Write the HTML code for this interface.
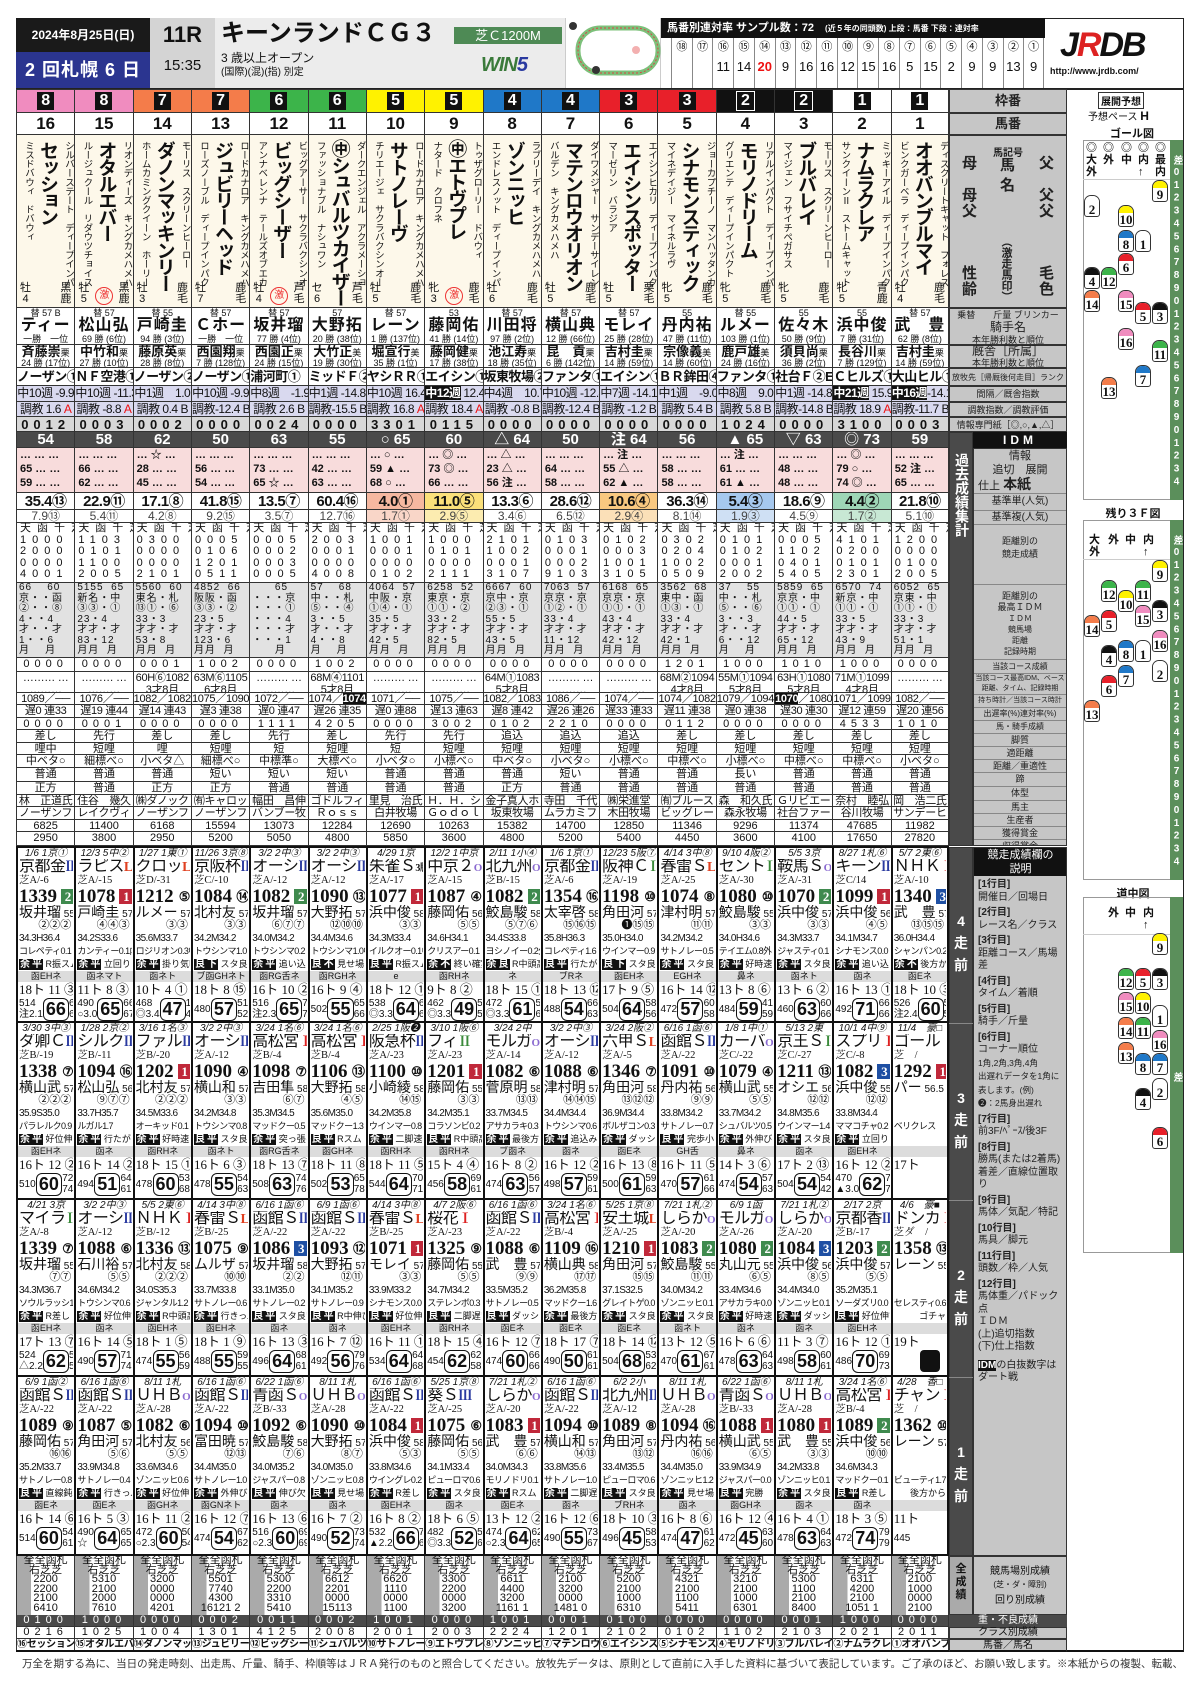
<!DOCTYPE html>
<html lang="ja"><head><meta charset="utf-8">
<style>
*{box-sizing:border-box;margin:0;padding:0}
body{width:1200px;height:1683px;background:#fff;position:relative;overflow:hidden;font-family:"Liberation Sans","Noto Sans CJK JP",sans-serif;color:#111}
.abs{position:absolute}
.r{position:absolute;left:16px;width:933px;display:grid;grid-template-columns:repeat(16,1fr);border-bottom:1px solid #333}
.r>div{border-left:1px solid #333;overflow:hidden;white-space:nowrap;text-align:center;position:relative}
.r>div:last-child{border-right:1px solid #333}
.fr>div{display:flex;align-items:center;justify-content:center}
.fr span{display:inline-block;width:17px;height:18px;background:#111;color:#fff;font-weight:bold;font-size:16px;line-height:18px;text-align:center}
.num>div{font-size:17px;font-weight:bold;line-height:22px}
.nm>div{background:#fdf8ea}
.vt{writing-mode:vertical-rl;text-orientation:upright;position:absolute;top:6px;white-space:nowrap}
.big{font-size:19px;font-weight:bold;letter-spacing:-2.4px;left:17px}
.sm{font-size:9.5px;letter-spacing:-.4px}
.sx{position:absolute;bottom:2px;font-size:11px;line-height:11px;text-align:center}
.jk>div{font-size:9px;line-height:10px}
.jk .jn{font-size:16px;font-weight:bold;line-height:16px;letter-spacing:1px;display:block}
.tr>div{font-size:9px;line-height:10px}
.tr .tn{font-size:13px;font-weight:bold;line-height:13px}
.t1>div{font-size:13px;line-height:17px;letter-spacing:-.5px;font-weight:bold}
.lav>div{background:#d9d9ef;font-size:12px;line-height:15px;letter-spacing:-.5px}
.dg>div{background:#d8d8d8;font-size:13px;line-height:15px;letter-spacing:5px;font-weight:bold}
.idm>div{background:#4a4a4a;color:#fff;font-size:15px;font-weight:bold;line-height:16px}
.pk>div{background:#f8dcdc;font-size:11px;line-height:14px;text-align:left;padding-left:3px;font-weight:bold}
.kt>div{font-size:15px;font-weight:bold;line-height:17px;letter-spacing:-.5px}
.kf>div{font-size:12px;line-height:12px;color:#444}
.ds>div{font-size:11px;line-height:11.5px;letter-spacing:6px;padding-left:3px;text-align:left}
.gb>div{background:#e2e2e2;font-size:10px;line-height:10.5px;text-align:left;padding-left:2px;letter-spacing:1px;white-space:pre}
.s1>div{font-size:11px;line-height:12px}
.s2>div{font-size:11px;line-height:12px;letter-spacing:-.3px}
.rb{position:absolute;left:16px;width:933px;display:grid;grid-template-columns:repeat(16,1fr);border-bottom:2px solid #111}
.rb>div{border-left:2px solid #111;overflow:hidden;white-space:nowrap;position:relative;padding:0 1px}
.rb>div:last-child{border-right:2px solid #111}
.rb>div>span{display:block;overflow:hidden}
.a{height:11px;font-size:10px;line-height:11px;font-style:italic;text-align:center}
.b{height:15px;font-size:16px;line-height:16px;letter-spacing:-.5px}
.b em{font-style:normal;font-family:"Liberation Serif","Noto Serif CJK SC",serif;font-weight:bold;font-size:14px}
.g1{color:#d22}.g2{color:#3a8a3a}.g3{color:#2a3aa0}.gl{color:#e04020}.go{color:#8a6ad0;font-size:11px!important}
.c{height:14px;font-size:10.5px;line-height:14px;font-family:"Liberation Serif","Noto Serif CJK SC",serif}
.d{height:17px;font-family:"Liberation Serif",serif;font-weight:bold;font-size:19px;line-height:17px}
.d i{font-style:normal;display:inline-block;min-width:14px;height:15px;font-size:13px;line-height:15px;text-align:center;margin-left:4px;vertical-align:1px}
.w1{background:#c0283a;color:#fff}.w2{background:#3f8a4e;color:#fff}.w3{background:#1e4fa3;color:#fff}
.e{height:14px;font-size:14px;line-height:14px}
.e small{font-size:10px}
.f{height:13px;font-size:11px;line-height:13px;text-align:right;padding-right:2px}
.h{height:13px;font-size:10px;line-height:13px;letter-spacing:-.6px}
.k{height:12px;font-size:9px;line-height:12px;letter-spacing:-.6px}
.l{height:14px;font-size:9px;line-height:14px}
.l b{background:#111;color:#fff;padding:0 1px;font-size:10px}
.m{height:11px;font-size:9px;line-height:11px;background:#dcdcdc;text-align:center;margin:0 -1px}
.n{height:15px;font-size:13px;line-height:15px;font-family:"Liberation Serif",serif}
.rb .o{height:24px;display:flex;align-items:center;justify-content:space-between;font-size:10px;line-height:11px}
.rb .o span{display:inline-block}
.o strong{border:1.5px solid #111;border-radius:6px;font-size:18px;padding:0 2px;line-height:21px;font-family:"Liberation Sans",sans-serif}
.lg{position:absolute;left:949px;width:118px;background:#c6c6c6;border:1px solid #333;font-size:10px;text-align:center;color:#222}
.cap{position:absolute;width:16px;height:22px;border:1px solid #333;border-radius:7px 7px 3px 3px;background:#fff;font-family:"Liberation Serif",serif;font-size:13px;font-weight:bold;text-align:center;line-height:28px;overflow:hidden}
.cap::before{content:"";position:absolute;left:0;top:0;width:100%;height:7px;background:var(--c)}
.stripe{position:absolute;left:1170px;width:13px;background:#5b8f5b;color:#fff;font-size:10px;line-height:13px;text-align:center;font-weight:bold;writing-mode:vertical-rl;text-orientation:upright;letter-spacing:1.9px;overflow:hidden;padding-top:4px}
</style></head><body>

<!-- HEADER -->
<div class="abs" style="left:16px;top:18px;width:1168px;height:71px;border:1px solid #222"></div>
<div class="abs" style="left:16px;top:18px;width:134px;height:34px;background:#1a1a1a;color:#fff;font-size:12px;font-weight:bold;line-height:34px;text-align:center">2024年8月25日(日)</div>
<div class="abs" style="left:16px;top:52px;width:134px;height:36px;background:#2b3590;color:#fff;font-size:18px;font-weight:bold;line-height:36px;text-align:center;letter-spacing:1px">2 回札幌 6 日</div>
<div class="abs" style="left:150px;top:18px;width:65px;height:70px;background:#d4d4d4;text-align:center"><div style="font-size:22px;font-weight:bold;line-height:34px">11R</div><div style="font-size:15px;line-height:28px">15:35</div></div>
<div class="abs" style="left:215px;top:18px;width:236px;height:70px;background:#ececec;padding-left:6px;overflow:hidden">
<div style="font-size:24px;font-weight:bold;line-height:32px;letter-spacing:0;white-space:nowrap">キーンランドＣＧ３</div>
<div style="font-size:12px;line-height:16px">3 歳以上オープン</div>
<div style="font-size:10px;line-height:14px">(国際)(混)(指) 別定</div></div>
<div class="abs" style="left:451px;top:18px;width:114px;height:70px;background:#ececec">
<div style="margin:9px 0 0 3px;width:108px;height:17px;background:#4e8a55;color:#fff;font-size:13px;line-height:17px;text-align:center">芝Ｃ1200M</div>
<div style="margin:10px 0 0 30px;font-size:20px;font-weight:900;font-style:italic;color:#3a7a3a;letter-spacing:-1px">WIN<span style="color:#2a3aa0">5</span></div></div>
<div class="abs" style="left:565px;top:18px;width:96px;height:70px;background:#fff;border-left:1px solid #ccc;border-right:1px solid #ccc">
<svg width="96" height="70"><rect x="12" y="10" width="80" height="45" rx="22" fill="none" stroke="#7cc07a" stroke-width="5"/><rect x="12" y="10" width="80" height="45" rx="22" fill="none" stroke="#d44" stroke-width="1" stroke-dasharray="2 2"/><circle cx="7" cy="8" r="4" fill="#333"/><circle cx="30" cy="52" r="4" fill="#333"/><circle cx="70" cy="32" r="4" fill="#f3b0b0"/></svg></div>
<div class="abs" style="left:661px;top:18px;width:384px;height:20px;background:#111;color:#fff;font-size:11px;line-height:20px;padding-left:6px;font-weight:bold;white-space:nowrap;overflow:hidden">馬番別連対率 サンプル数：72 <span style="font-size:8px">　(近５年の同頭数) 上段：馬番 下段：連対率</span></div>
<div class="abs" style="left:671px;top:38px;width:373px;height:50px;display:grid;grid-template-columns:repeat(18,1fr);font-size:11px;text-align:center">
<div style="border-left:1px solid #888">⑱<br><br></div><div style="border-left:1px solid #888">⑰</div><div style="border-left:1px solid #888">⑯<br><span style="font-size:13px;line-height:26px">11</span></div><div style="border-left:1px solid #888">⑮<br><span style="font-size:13px;line-height:26px">14</span></div><div style="border-left:1px solid #888">⑭<br><span style="font-size:13px;line-height:26px;color:#e11;font-weight:bold">20</span></div><div style="border-left:1px solid #888">⑬<br><span style="font-size:13px;line-height:26px">9</span></div><div style="border-left:1px solid #888">⑫<br><span style="font-size:13px;line-height:26px">16</span></div><div style="border-left:1px solid #888">⑪<br><span style="font-size:13px;line-height:26px">16</span></div><div style="border-left:1px solid #888">⑩<br><span style="font-size:13px;line-height:26px">12</span></div><div style="border-left:1px solid #888">⑨<br><span style="font-size:13px;line-height:26px">15</span></div><div style="border-left:1px solid #888">⑧<br><span style="font-size:13px;line-height:26px">16</span></div><div style="border-left:1px solid #888">⑦<br><span style="font-size:13px;line-height:26px">5</span></div><div style="border-left:1px solid #888">⑥<br><span style="font-size:13px;line-height:26px">15</span></div><div style="border-left:1px solid #888">⑤<br><span style="font-size:13px;line-height:26px">2</span></div><div style="border-left:1px solid #888">④<br><span style="font-size:13px;line-height:26px">9</span></div><div style="border-left:1px solid #888">③<br><span style="font-size:13px;line-height:26px">9</span></div><div style="border-left:1px solid #888">②<br><span style="font-size:13px;line-height:26px">13</span></div><div style="border-left:1px solid #888;border-right:1px solid #888">①<br><span style="font-size:13px;line-height:26px">9</span></div></div>
<div class="abs" style="left:1060px;top:26px;font-size:34px;font-weight:900;font-style:italic;letter-spacing:-2px;color:#111">J<span style="color:#d22">R</span>DB</div>
<div class="abs" style="left:1050px;top:66px;font-size:9px;font-weight:bold">http://www.jrdb.com/</div>

<!-- FRAME ROW -->
<div class="r fr" style="top:89px;height:24px;border-top:1px solid #333">
<div style="background:#f08cbf"><span>8</span></div><div style="background:#f08cbf"><span>8</span></div><div style="background:#f47c4a"><span>7</span></div><div style="background:#f47c4a"><span>7</span></div><div style="background:#3cb44a"><span>6</span></div><div style="background:#3cb44a"><span>6</span></div><div style="background:#fff200"><span>5</span></div><div style="background:#fff200"><span>5</span></div><div style="background:#1f78c8"><span>4</span></div><div style="background:#1f78c8"><span>4</span></div><div style="background:#e8202a"><span>3</span></div><div style="background:#e8202a"><span>3</span></div><div style="background:#111"><span style="outline:1px solid #fff">2</span></div><div style="background:#111"><span style="outline:1px solid #fff">2</span></div><div style="background:#fff"><span>1</span></div><div style="background:#fff"><span>1</span></div></div>
<div class="r num" style="top:113px;height:22px"><div>16</div><div>15</div><div>14</div><div>13</div><div>12</div><div>11</div><div>10</div><div>9</div><div>8</div><div>7</div><div>6</div><div>5</div><div>4</div><div>3</div><div>2</div><div>1</div></div>

<!-- NAMES -->
<div class="r nm" style="top:135px;height:173px">
<div><span class="vt sm" style="left:4px">ミスドバウィ　ドバウィ</span><span class="vt big">セッション</span><span class="vt sm" style="left:44px">シルバーステート　ディープインパ</span><span class="sx" style="left:3px">牡<br>4</span><span class="sx" style="right:3px">黒<br>鹿</span></div>
<div><span class="vt sm" style="left:4px">ルージュクール　リダウツチョイス</span><span class="vt big">オタルエバー</span><span class="vt sm" style="left:44px">リオンディーズ　キングカメハメハ</span><span class="sx" style="left:3px">牡<br>5</span><span class="abs" style="left:20px;bottom:2px;width:18px;height:18px;border:1px solid #e33;border-radius:50%;color:#e33;font-size:10px;line-height:16px">激</span><span class="sx" style="right:3px">黒<br>鹿</span></div>
<div><span class="vt sm" style="left:4px">ホームカミングクイーン　ホーリー</span><span class="vt big">ダノンマッキンリー</span><span class="vt sm" style="left:44px">モーリス　スクリーンヒーロー</span><span class="sx" style="left:3px">牡<br>3</span><span class="sx" style="right:3px">鹿<br>毛</span></div>
<div><span class="vt sm" style="left:4px">ローズノーブル　ディープインパク</span><span class="vt big">ジュビリーヘッド</span><span class="vt sm" style="left:44px">ロードカナロア　キングカメハメハ</span><span class="sx" style="left:3px">牡<br>7</span><span class="sx" style="right:3px">鹿<br>毛</span></div>
<div><span class="vt sm" style="left:4px">アンナベレンナ　テールズオブエカ</span><span class="vt big">ビッグシーザー</span><span class="vt sm" style="left:44px">ビッグアーサー　サクラバクシンオ</span><span class="sx" style="left:3px">牡<br>4</span><span class="abs" style="left:20px;bottom:2px;width:18px;height:18px;border:1px solid #e33;border-radius:50%;color:#e33;font-size:10px;line-height:16px">激</span><span class="sx" style="right:3px">芦<br>毛</span></div>
<div><span class="vt sm" style="left:4px">ファッショナブル　ナシュワン</span><span class="vt big" style="top:4px">㊥シュバルツカイザー</span><span class="vt sm" style="left:44px">ダークエンジェル　アクラメーショ</span><span class="sx" style="left:3px">セ<br>6</span><span class="sx" style="right:3px">芦<br>毛</span></div>
<div><span class="vt sm" style="left:4px">チリエージェ　サクラバクシンオー</span><span class="vt big">サトノレーヴ</span><span class="vt sm" style="left:44px">ロードカナロア　キングカメハメハ</span><span class="sx" style="left:3px">牡<br>5</span><span class="sx" style="right:3px">鹿<br>毛</span></div>
<div><span class="vt sm" style="left:4px">ナタード　クロフネ</span><span class="vt big" style="top:4px">㊥エトヴプレ</span><span class="vt sm" style="left:44px">トゥザグローリー　ドバウィ</span><span class="sx" style="left:3px">牝<br>3</span><span class="abs" style="left:20px;bottom:2px;width:18px;height:18px;border:1px solid #e33;border-radius:50%;color:#e33;font-size:10px;line-height:16px">激</span><span class="sx" style="right:3px">鹿<br>毛</span></div>
<div><span class="vt sm" style="left:4px">エンドレスノット　ディープインパ</span><span class="vt big">ゾンニッヒ</span><span class="vt sm" style="left:44px">ラブリーデイ　キングカメハメハ</span><span class="sx" style="left:3px">牡<br>6</span><span class="sx" style="right:3px">鹿<br>毛</span></div>
<div><span class="vt sm" style="left:4px">バルデン　キングカメハメハ</span><span class="vt big">マテンロウオリオン</span><span class="vt sm" style="left:44px">ダイワメジャー　サンデーサイレン</span><span class="sx" style="left:3px">牡<br>5</span><span class="sx" style="right:3px">鹿<br>毛</span></div>
<div><span class="vt sm" style="left:4px">マーゼリン　バラジア</span><span class="vt big">エイシンスポッター</span><span class="vt sm" style="left:44px">エイシンヒカリ　ディープインパク</span><span class="sx" style="left:3px">牡<br>5</span><span class="sx" style="right:3px">栗<br>毛</span></div>
<div><span class="vt sm" style="left:4px">マイネデイジー　マイネルラヴ</span><span class="vt big">シナモンスティック</span><span class="vt sm" style="left:44px">ジョーカプチーノ　マンハッタンカ</span><span class="sx" style="left:3px">牝<br>5</span><span class="sx" style="right:3px">鹿<br>毛</span></div>
<div><span class="vt sm" style="left:4px">グリエンテ　ディープインパクト</span><span class="vt big">モリノドリーム</span><span class="vt sm" style="left:44px">リアルインパクト　ディープインパ</span><span class="sx" style="left:3px">牝<br>5</span><span class="sx" style="right:3px">鹿<br>毛</span></div>
<div><span class="vt sm" style="left:4px">マイジェン　フサイチペガサス</span><span class="vt big">ブルバレイ</span><span class="vt sm" style="left:44px">モーリス　スクリーンヒーロー</span><span class="sx" style="left:3px">牝<br>5</span><span class="sx" style="right:3px">鹿<br>毛</span></div>
<div><span class="vt sm" style="left:4px">サンクイーンⅡ　ストームキャット</span><span class="vt big">ナムラクレア</span><span class="vt sm" style="left:44px">ミッキーアイル　ディープインパク</span><span class="sx" style="left:3px">牝<br>5</span><span class="sx" style="right:3px">青<br>鹿</span></div>
<div><span class="vt sm" style="left:4px">ビンクガーベラ　ディープインパク</span><span class="vt big">オオバンブルマイ</span><span class="vt sm" style="left:44px">ディスクリートキャット　フォレス</span><span class="sx" style="left:3px">牡<br>4</span><span class="sx" style="right:3px">鹿<br>毛</span></div>
</div>

<!-- JOCKEY -->
<div class="r jk" style="top:308px;height:37px">
<div>替 57 B<span class="jn">ティー</span>一勝　一位</div>
<div>替 57<span class="jn">松山弘</span>69 勝 (6位)</div>
<div>替 55<span class="jn">戸崎圭</span>94 勝 (3位)</div>
<div>替 57<span class="jn">Ｃホー</span>一勝　一位</div>
<div>替 57<span class="jn">坂井瑠</span>77 勝 (4位)</div>
<div>57<span class="jn">大野拓</span>20 勝 (38位)</div>
<div>替 57<span class="jn">レーン</span>1 勝 (137位)</div>
<div>53<span class="jn">藤岡佑</span>41 勝 (14位)</div>
<div>替 57<span class="jn">川田将</span>97 勝 (2位)</div>
<div>替 57<span class="jn">横山典</span>12 勝 (66位)</div>
<div>替 57<span class="jn">モレイ</span>25 勝 (28位)</div>
<div>55<span class="jn">丹内祐</span>47 勝 (11位)</div>
<div>替 55<span class="jn">ルメー</span>103 勝 (1位)</div>
<div>55<span class="jn">佐々木</span>50 勝 (9位)</div>
<div>55<span class="jn">浜中俊</span>7 勝 (31位)</div>
<div>替 57<span class="jn">武　豊</span>62 勝 (8位)</div></div>
<div class="r tr" style="top:345px;height:23px">
<div><span class="tn">斉藤崇</span>栗<br>24 勝 (17位)</div><div><span class="tn">中竹和</span>栗<br>27 勝 (10位)</div><div><span class="tn">藤原英</span>栗<br>28 勝 (8位)</div><div><span class="tn">西園翔</span>栗<br>7 勝 (128位)</div><div><span class="tn">西園正</span>栗<br>24 勝 (15位)</div><div><span class="tn">大竹正</span>美<br>19 勝 (30位)</div><div><span class="tn">堀宣行</span>美<br>35 勝 (1位)</div><div><span class="tn">藤岡健</span>栗<br>17 勝 (38位)</div><div><span class="tn">池江寿</span>栗<br>18 勝 (35位)</div><div><span class="tn">昆　貢</span>栗<br>6 勝 (142位)</div><div><span class="tn">吉村圭</span>栗<br>14 勝 (59位)</div><div><span class="tn">宗像義</span>美<br>14 勝 (60位)</div><div><span class="tn">鹿戸雄</span>美<br>24 勝 (16位)</div><div><span class="tn">須貝尚</span>栗<br>36 勝 (2位)</div><div><span class="tn">長谷川</span>栗<br>7 勝 (129位)</div><div><span class="tn">吉村圭</span>栗<br>14 勝 (59位)</div></div>
<div class="r t1" style="top:368px;height:18px"><div>ノーザン①D</div><div>ＮＦ空港①D</div><div>ノーザン②<span style="color:#e11">A</span></div><div>ノーザン①D</div><div>浦河町①　-</div><div>ミッドＦ②B</div><div>ヤシＲＲ①-</div><div>エイシン①<span style="color:#e11">A</span></div><div>坂東牧場②<span style="color:#e11">A</span></div><div>ファンタ①C</div><div>エイシン①<span style="color:#e11">A</span></div><div>ＢＲ鉾田④D</div><div>ファンタ①C</div><div>社台Ｆ②E</div><div>Ｃヒルズ①<span style="color:#e11">A</span></div><div>大山ヒル①<span style="color:#e11">A</span></div></div>
<div class="r lav" style="top:386px;height:16px"><div>中10週 -9.9</div><div>中10週 -11.3</div><div>中1週　1.0</div><div>中10週 -9.9</div><div>中8週　-1.9</div><div>中1週 -14.8</div><div>中10週 16.4</div><div><b style="background:#111;color:#fff">中12週</b> 12.4</div><div>中4週　10.7</div><div>中10週 -12.4</div><div>中7週 -14.1</div><div>中1週　-9.0</div><div>中8週　9.0</div><div>中1週 -14.8</div><div><b style="background:#111;color:#fff">中21週</b> 15.9</div><div><b style="background:#111;color:#fff">中16週</b>-14.1</div></div>
<div class="r lav" style="top:402px;height:15px"><div>調教 1.6 <span style="color:#e11">A</span></div><div>調教 -8.8 <span style="color:#e11">A</span></div><div>調教 0.4 B</div><div>調教-12.4 B</div><div>調教 2.6 B</div><div>調教-15.5 B</div><div>調教 16.8 <span style="color:#e11">A</span></div><div>調教 18.4 <span style="color:#e11">A</span></div><div>調教 -0.8 B</div><div>調教-12.4 B</div><div>調教 -1.2 B</div><div>調教 5.4 B</div><div>調教 5.8 B</div><div>調教-14.8 B</div><div>調教 18.9 <span style="color:#e11">A</span></div><div>調教-11.7 B</div></div>
<div class="r dg" style="top:417px;height:15px"><div>0012</div><div>0003</div><div>0002</div><div>0000</div><div>0024</div><div>0000</div><div>3301</div><div>0115</div><div>0000</div><div>0000</div><div>0000</div><div>0000</div><div>1024</div><div>0000</div><div>3100</div><div>0003</div></div>
<div class="r idm" style="top:432px;height:16px"><div>54</div><div>58</div><div>62</div><div>50</div><div>63</div><div>55</div><div>○ 65</div><div>60</div><div>△ 64</div><div>50</div><div>注 64</div><div>56</div><div>▲ 65</div><div>▽ 63</div><div>◎ 73</div><div>59</div></div>
<div class="r pk" style="top:448px;height:45px"><div>… … …<br>65 … …<br>59 … …</div><div>… … …<br>66 … …<br>62 … …</div><div>… ☆ …<br>28 … …<br>45 … …</div><div>… … …<br>56 … …<br>54 … …</div><div>… … …<br>73 … …<br>65 ☆ …</div><div>… … …<br>42 … …<br>63 … …</div><div>… ○ …<br>59 ▲ …<br>68 ○ …</div><div>… ◎ …<br>73 ◎ …<br>66 … …</div><div>… △ …<br>23 △ …<br>56 注 …</div><div>… … …<br>64 … …<br>58 … …</div><div>… 注 …<br>55 △ …<br>62 ▲ …</div><div>… … …<br>58 … …<br>58 … …</div><div>… 注 …<br>61 … …<br>61 ▲ …</div><div>… … …<br>48 … …<br>48 … …</div><div>… ◎ …<br>79 ○ …<br>74 ◎ …</div><div>… … …<br>52 注 …<br>65 … …</div></div>
<div class="r kt" style="top:493px;height:17px"><div>35.4⑬</div><div>22.9⑪</div><div>17.1⑧</div><div>41.8⑮</div><div>13.5⑦</div><div>60.4⑯</div><div style="background:#f6b8a0">4.0①</div><div style="background:#fbe07a">11.0⑤</div><div>13.3⑥</div><div>28.6⑫</div><div style="background:#f9c880">10.6④</div><div>36.3⑭</div><div style="background:#a6c8ee">5.4③</div><div>18.6⑨</div><div style="background:#9ed6b6">4.4②</div><div>21.8⑩</div></div>
<div class="r kf" style="top:510px;height:13px"><div>7.9⑬</div><div>5.4⑪</div><div>4.2⑧</div><div>9.2⑮</div><div>3.5⑦</div><div>12.7⑯</div><div style="background:#f9d6c8">1.7①</div><div style="background:#fcecb0">2.9⑤</div><div>3.4⑥</div><div>6.5⑫</div><div style="background:#fbe0b8">2.9④</div><div>8.1⑭</div><div style="background:#cfe0f4">1.9③</div><div>4.5⑨</div><div style="background:#c8e8d4">1.7②</div><div>5.1⑩</div></div>
<div class="r ds" style="top:523px;height:60px"><div>天函千芝<br>1000<br>2000<br>0000<br>4001</div><div>天函千芝<br>1103<br>0101<br>1100<br>2005</div><div>天函千芝<br>0300<br>0000<br>0000<br>2101</div><div>天函千芝<br>0005<br>0106<br>1201<br>0511</div><div>天函千芝<br>0005<br>0002<br>0003<br>0005</div><div>天函千芝<br>2003<br>0001<br>0000<br>4008</div><div>天函千芝<br>1001<br>0001<br>0000<br>0102</div><div>天函千芝<br>1000<br>0101<br>0000<br>2111</div><div>天函千芝<br>2101<br>1002<br>0001<br>3107</div><div>天函千芝<br>0103<br>0001<br>0002<br>9103</div><div>天函千芝<br>0102<br>0003<br>1001<br>3105</div><div>天函千芝<br>0302<br>0204<br>1002<br>0509</div><div>天函千芝<br>0101<br>0102<br>0001<br>2002</div><div>天函千芝<br>0005<br>1102<br>0401<br>5405</div><div>天函千芝<br>4101<br>0200<br>0101<br>2301</div><div>天函千芝<br>1200<br>0000<br>0100<br>2005</div></div>
<div class="r gb" style="top:583px;height:75px"><div>66    60
京・・函
②・・⑧
4・・4
才・・才
1・・6
月    月</div><div>5155  65
新名・中
③③・①
23・4
才才・才
83・12
月月  月</div><div>5560  60
東名・札
⑬①・⑥
33・3
才才・才
53・8
月月  月</div><div>4852  66
阪阪・函
③③・②
23・5
才才・才
123・6
月月  月</div><div>      65
・・・京
・・・①
・・・4
・・・才
・・・1
      月</div><div>57    68
中・・札
⑤・・④
3・・5
才・・才
4・・8
月    月</div><div>4064  57
中阪・京
①④・①
35・5
才才・才
42・5
月月  月</div><div>6258  52
東京・京
①①・②
33・2
才才・才
82・5
月月  月</div><div>6667  60
京中・京
②③・①
55・5
才才・才
43・5
月月  月</div><div>7063  57
京京・京
①②・①
33・4
才才・才
11・12
月月  月</div><div>6168  65
京京・京
①①・①
43・4
才才・才
42・12
月月  月</div><div>3562  68
東中・函
①③・①
33・4
才才・才
42・1
月月  月</div><div>37    55
中・・札
⑤・・⑥
3・・3
才・・才
6・・12
月    月</div><div>5859  65
京京・中
①①・①
44・5
才才・才
65・12
月月  月</div><div>6570  74
新京・中
①①・①
33・5
才才・才
43・9
月月  月</div><div>6052  65
京東・中
①①・①
33・3
才才・才
51・1
月月  月</div></div>
<div class="r s1" style="top:658px;height:14px;letter-spacing:5px"><div>0000</div><div>0000</div><div>0001</div><div>1002</div><div>0000</div><div>1002</div><div>0000</div><div>0000</div><div>0000</div><div>0000</div><div>0000</div><div>1201</div><div>1000</div><div>1010</div><div>1000</div><div>0000</div></div>
<div class="r s2" style="top:672px;height:21px;font-size:10px"><div>……… …<br>………</div><div>……… …<br>………</div><div>60H⑥1082<br>3才8月</div><div>63M⑥1105<br>6才8月</div><div>……… …<br>………</div><div>68M④1101<br>5才8月</div><div>……… …<br>………</div><div>……… …<br>………</div><div>64M①1083<br>5才8月</div><div>……… …<br>………</div><div>……… …<br>………</div><div>68M②1094<br>4才8月</div><div>55M①1094<br>5才8月</div><div>63H①1080<br>5才8月</div><div>71M①1099<br>4才8月</div><div>……… …<br>………</div></div>
<div class="r s2" style="top:693px;height:12px"><div>1089／──</div><div>1076／──</div><div>1082／1082</div><div>1075／1090</div><div>1072／──</div><div>1074／<b style="background:#111;color:#fff">1074</b></div><div>1071／──</div><div>1075／──</div><div>1082／1083</div><div>1086／──</div><div>1074／──</div><div>1074／1082</div><div>1079／1094</div><div><b style="background:#111;color:#fff">1070</b>／1080</div><div>1071／1099</div><div>1082／──</div></div>
<div class="r s2" style="top:705px;height:13px"><div>遅0 連33</div><div>遅19 連44</div><div>遅14 連43</div><div>遅3 連38</div><div>遅0 連47</div><div>遅26 連35</div><div>遅0 連88</div><div>遅13 連63</div><div>遅8 連42</div><div>遅26 連26</div><div>遅33 連33</div><div>遅11 連38</div><div>遅0 連38</div><div>遅30 連30</div><div>遅12 連59</div><div>遅20 連56</div></div>
<div class="r s1" style="top:718px;height:12px;letter-spacing:5px"><div>0000</div><div>0001</div><div>0000</div><div>0000</div><div>1111</div><div>4205</div><div>0000</div><div>3002</div><div>0102</div><div>2210</div><div>0000</div><div>0112</div><div>0000</div><div>0000</div><div>4533</div><div>1010</div></div>
<div class="r s1" style="top:730px;height:13px"><div>差し</div><div>先行</div><div>差し</div><div>差し</div><div>先行</div><div>差し</div><div>先行</div><div>先行</div><div>追込</div><div>追込</div><div>追込</div><div>差し</div><div>差し</div><div>差し</div><div>差し</div><div>差し</div></div>
<div class="r s1" style="top:743px;height:12px"><div>哩中</div><div>短哩</div><div>哩</div><div>短哩</div><div>短</div><div>短哩</div><div>短</div><div>短哩</div><div>短哩</div><div>短哩</div><div>短哩</div><div>短哩</div><div>短哩</div><div>短哩</div><div>短哩</div><div>短哩</div></div>
<div class="r s1" style="top:755px;height:13px"><div>中ベタ○</div><div>細標べ○</div><div>小ベタ△</div><div>細標べ○</div><div>中標準○</div><div>大標べ○</div><div>小ベタ○</div><div>小標べ○</div><div>中ベタ○</div><div>小ベタ○</div><div>小標べ○</div><div>中標べ○</div><div>小標べ○</div><div>中標べ○</div><div>中標べ○</div><div>小ベタ○</div></div>
<div class="r s1" style="top:768px;height:14px"><div>普通</div><div>普通</div><div>普通</div><div>短い</div><div>短い</div><div>短い</div><div>普通</div><div>普通</div><div>普通</div><div>短い</div><div>普通</div><div>普通</div><div>長い</div><div>普通</div><div>普通</div><div>普通</div></div>
<div class="r s1" style="top:782px;height:13px"><div>正方</div><div>普通</div><div>正方</div><div>正方</div><div>普通</div><div>普通</div><div>普通</div><div>普通</div><div>正方</div><div>普通</div><div>普通</div><div>普通</div><div>普通</div><div>普通</div><div>普通</div><div>普通</div></div>
<div class="r s2" style="top:795px;height:12px"><div>林　正道氏</div><div>住谷　幾久</div><div>㈱ダノック</div><div>㈲キャロッ</div><div>幅田　昌伸</div><div>ゴドルフィ</div><div>里見　治氏</div><div>Ｈ．Ｈ．シ</div><div>金子真人ホ</div><div>寺田　千代</div><div>㈱栄進堂</div><div>㈲ブルース</div><div>森　和久氏</div><div>Ｇリビエー</div><div>奈村　睦弘</div><div>岡　浩二氏</div></div>
<div class="r s2" style="top:807px;height:13px"><div>ノーザンフ</div><div>レイクヴィ</div><div>ノーザンフ</div><div>ノーザンフ</div><div>バンブー牧</div><div>Ｒｏｓｓ</div><div>白井牧場</div><div>Ｇｏｄｏｌ</div><div>坂東牧場</div><div>ムラカミフ</div><div>木田牧場</div><div>ビッグレー</div><div>森永牧場</div><div>社台ファー</div><div>谷川牧場</div><div>サンデーヒ</div></div>
<div class="r s1" style="top:820px;height:12px;font-size:12px"><div>6825</div><div>11400</div><div>6168</div><div>15594</div><div>13073</div><div>12284</div><div>12690</div><div>10263</div><div>15382</div><div>14700</div><div>12850</div><div>11346</div><div>9296</div><div>11374</div><div>47685</div><div>11982</div></div>
<div class="r s1" style="top:832px;height:14px;font-size:12px"><div>2950</div><div>3800</div><div>2950</div><div>5200</div><div>5050</div><div>4800</div><div>5850</div><div>3600</div><div>4800</div><div>5200</div><div>5400</div><div>4450</div><div>3600</div><div>4100</div><div>17650</div><div>27820</div></div>

<!-- RACE BLOCK 1 -->
<div class="rb" style="top:846px;height:177px;border-top:2px solid #111">
<div><span class="a">1/6 1京①</span><span class="b">京都金<em class="g3">Ⅲ</em></span><span class="c">芝A/-6</span><span class="d">1339<i class="w2">2</i></span><span class="e">坂井瑠<small> 55</small></span><span class="f">②②②</span><span class="h">34.3H36.4</span><span class="k">コレペティ0.1</span><span class="l"><b>余</b><b>平</b> R振スム</span><span class="m">函EHネ</span><span class="n">18ト 11 ③</span><span class="o"><span>514<br>注2.1</span><strong>66</strong><span>60<br>64</span></span></div>
<div><span class="a">12/3 5中②</span><span class="b">ラピス<em class="gl">L</em></span><span class="c">芝A/-15</span><span class="d">1078<i class="w1">1</i></span><span class="e">戸崎圭<small> 57</small></span><span class="f">④④③</span><span class="h">34.2S33.6</span><span class="k">カンティー0.1内</span><span class="l"><b>余</b><b>平</b> 立回り</span><span class="m">函ネマト</span><span class="n">11ト 8 ③</span><span class="o"><span>490<br>○3.0</span><strong>65</strong><span>66<br>67</span></span></div>
<div><span class="a">1/27 1東①</span><span class="b">クロッ<em class="gl">L</em></span><span class="c">芝D/-31</span><span class="d">1212<i>⑤</i></span><span class="e">ルメー<small> 57</small></span><span class="f">③③</span><span class="h">35.6M33.7</span><span class="k">ロジリオン0.3中</span><span class="l"><b>余</b><b>平</b> 掛り気味</span><span class="m">函ネト</span><span class="n">10ト 4 ①</span><span class="o"><span>468<br>◎3.4</span><strong>47</strong><span>16<br>41</span></span></div>
<div><span class="a">11/26 3京⑧</span><span class="b">京阪杯<em class="g3">Ⅲ</em></span><span class="c">芝C/-10</span><span class="d">1084<i>⑭</i></span><span class="e">北村友<small> 57</small></span><span class="f">③③</span><span class="h">34.2M34.2</span><span class="k">トウシンマ1.0</span><span class="l"><b>良</b><b>下</b> スタ良い</span><span class="m">ブ函GHネト</span><span class="n">18ト 8 ⑮</span><span class="o"><span>480<br></span><strong>57</strong><span>51<br>52</span></span></div>
<div><span class="a">3/2 2中③</span><span class="b">オーシ<em class="g3">Ⅲ</em></span><span class="c">芝A/-12</span><span class="d">1082<i class="w2">2</i></span><span class="e">坂井瑠<small> 57</small></span><span class="f">⑥⑦⑦</span><span class="h">34.0M34.2</span><span class="k">トウシンマ0.2</span><span class="l"><b>余</b><b>平</b> 追い込</span><span class="m">函RG舌ネ</span><span class="n">16ト 10 ②</span><span class="o"><span>516<br>注2.3</span><strong>65</strong><span>77<br>77</span></span></div>
<div><span class="a">3/2 2中③</span><span class="b">オーシ<em class="g3">Ⅲ</em></span><span class="c">芝A/-12</span><span class="d">1090<i>⑬</i></span><span class="e">大野拓<small> 57</small></span><span class="f">⑫⑩⑩</span><span class="h">34.4M34.6</span><span class="k">トウシンマ1.0中</span><span class="l"><b>良</b><b>不</b> 見せ場</span><span class="m">函RGHネ</span><span class="n">16ト 9 ④</span><span class="o"><span>502<br></span><strong>55</strong><span>65<br>66</span></span></div>
<div><span class="a">4/29 1京</span><span class="b">朱雀Ｓ<em style="font-size:10px">3勝</em></span><span class="c">芝A/-17</span><span class="d">1077<i class="w1">1</i></span><span class="e">浜中俊<small> 58</small></span><span class="f">③③</span><span class="h">34.3M33.4</span><span class="k">イルクオー0.1中</span><span class="l"><b>良</b><b>平</b> R振スム</span><span class="m">e</span><span class="n">18ト 12 ①</span><span class="o"><span>538<br>◎3.3</span><strong>64</strong><span>64<br>62</span></span></div>
<div><span class="a">12/2 1中京</span><span class="b">中京２<em class="go">OP</em></span><span class="c">芝A/-15</span><span class="d">1087<i>④</i></span><span class="e">藤岡佑<small> 56</small></span><span class="f">⑤⑤</span><span class="h">34.6H34.1</span><span class="k">クリスアー0.1</span><span class="l"><b>余</b><b>不</b> 終い確実</span><span class="m">函RHネ</span><span class="n">9ト 8 ②</span><span class="o"><span>462<br>◎3.3</span><strong>49</strong><span>56<br>59</span></span></div>
<div><span class="a">2/11 1小④</span><span class="b">北九州<em class="go">OP</em></span><span class="c">芝B/-15</span><span class="d">1082<i class="w2">2</i></span><span class="e">鮫島駿<small> 58</small></span><span class="f">⑤⑦⑥</span><span class="h">34.4S33.8</span><span class="k">ヨシノイー0.2外</span><span class="l"><b>余</b><b>良</b> R中頭高</span><span class="m">ネ</span><span class="n">18ト 15 ①</span><span class="o"><span>472<br>◎3.3</span><strong>61</strong><span>56<br>61</span></span></div>
<div><span class="a">1/6 1京①</span><span class="b">京都金<em class="g3">Ⅲ</em></span><span class="c">芝A/-6</span><span class="d">1354<i>⑯</i></span><span class="e">太宰啓<small> 58</small></span><span class="f">⑮⑯⑮</span><span class="h">35.8H36.3</span><span class="k">コレペティ1.6</span><span class="l"><b>良</b><b>平</b> 行たがる</span><span class="m">ブRネ</span><span class="n">18ト 13 ⑫</span><span class="o"><span>488<br></span><strong>54</strong><span>66<br>63</span></span></div>
<div><span class="a">12/23 5阪⑦</span><span class="b">阪神Ｃ<em class="g2">Ⅱ</em></span><span class="c">芝A/-19</span><span class="d">1198<i>⑩</i></span><span class="e">角田河<small> 57</small></span><span class="f">❶⑮⑮</span><span class="h">35.0H34.0</span><span class="k">ウインマー0.9</span><span class="l"><b>良</b><b>下</b> スタ良い</span><span class="m">函EHネ</span><span class="n">17ト 9 ⑤</span><span class="o"><span>504<br></span><strong>64</strong><span>58<br>56</span></span></div>
<div><span class="a">4/14 3中⑧</span><span class="b">春雷Ｓ<em class="gl">L</em></span><span class="c">芝A/-25</span><span class="d">1074<i>⑧</i></span><span class="e">津村明<small> 57</small></span><span class="f">⑪⑪</span><span class="h">34.2M34.2</span><span class="k">サトノレー0.5</span><span class="l"><b>余</b><b>平</b> スタ良い</span><span class="m">EGHネ</span><span class="n">16ト 14 ⑫</span><span class="o"><span>472<br></span><strong>57</strong><span>60<br>58</span></span></div>
<div><span class="a">9/10 4阪②</span><span class="b">セント<em class="g2">Ⅱ</em></span><span class="c">芝A/-30</span><span class="d">1080<i>⑩</i></span><span class="e">鮫島駿<small> 55</small></span><span class="f">③③</span><span class="h">34.0H34.6</span><span class="k">テイエム0.8外</span><span class="l"><b>余</b><b>平</b> 好時速</span><span class="m">鼻ネ</span><span class="n">13ト 8 ⑥</span><span class="o"><span>484<br></span><strong>59</strong><span>41<br>59</span></span></div>
<div><span class="a">5/5 3京</span><span class="b">鞍馬Ｓ<em class="go">OP</em></span><span class="c">芝A/-31</span><span class="d">1070<i class="w2">2</i></span><span class="e">浜中俊<small> 57</small></span><span class="f">③③</span><span class="h">34.3M33.7</span><span class="k">ジャスティ0.1</span><span class="l"><b>余</b><b>平</b> スタ良い</span><span class="m">函ネト</span><span class="n">13ト 6 ②</span><span class="o"><span>460<br></span><strong>63</strong><span>60<br>66</span></span></div>
<div><span class="a">8/27 1札⑥</span><span class="b">キーン<em class="g3">Ⅲ</em></span><span class="c">芝C/14</span><span class="d">1099<i class="w1">1</i></span><span class="e">浜中俊<small> 56</small></span><span class="f">④⑤</span><span class="h">34.1M34.7</span><span class="k">シナモンス0.0</span><span class="l"><b>余</b><b>平</b> 追い込</span><span class="m">函ネ</span><span class="n">16ト 13 ①</span><span class="o"><span>492<br></span><strong>71</strong><span>66<br>66</span></span></div>
<div><span class="a">5/7 2東⑥</span><span class="b">ＮＨＫ<em class="g1">Ⅰ</em></span><span class="c">芝A/-10</span><span class="d">1340<i class="w3">3</i></span><span class="e">武　豊<small> 57</small></span><span class="f">⑬⑮⑮</span><span class="h">36.0H34.4</span><span class="k">シャンパン0.2外</span><span class="l"><b>余</b><b>不</b> 後方から</span><span class="m">函Eネ</span><span class="n">18ト 10 ③</span><span class="o"><span>526<br>注2.4</span><strong>60</strong><span>54<br>58</span></span></div>
</div>

<!-- RACE BLOCK 2 -->
<div class="rb" style="top:1023px;height:177px">
<div><span class="a">3/30 3中③</span><span class="b">ダ卿Ｃ<em class="g3">Ⅲ</em></span><span class="c">芝B/-19</span><span class="d">1338<i>⑦</i></span><span class="e">横山武<small> 57</small></span><span class="f">②②②</span><span class="h">35.9S35.0</span><span class="k">パラレルク0.9</span><span class="l"><b>余</b><b>平</b> 好位伸び</span><span class="m">函EHネ</span><span class="n">16ト 12 ②</span><span class="o"><span>510<br></span><strong>60</strong><span>72<br>74</span></span></div>
<div><span class="a">1/28 2京②</span><span class="b">シルク<em class="g3">Ⅲ</em></span><span class="c">芝B/-11</span><span class="d">1094<i>⑯</i></span><span class="e">松山弘<small> 56</small></span><span class="f">⑨⑦⑦</span><span class="h">33.7H35.7</span><span class="k">ルガル1.7</span><span class="l"><b>余</b><b>平</b> 行たがる</span><span class="m">函ネ</span><span class="n">16ト 14 ②</span><span class="o"><span>494<br></span><strong>51</strong><span>64<br>61</span></span></div>
<div><span class="a">3/16 1名③</span><span class="b">ファル<em class="g3">Ⅲ</em></span><span class="c">芝B/-20</span><span class="d">1202<i class="w1">1</i></span><span class="e">北村友<small> 57</small></span><span class="f">②②②</span><span class="h">34.5M33.6</span><span class="k">オーキッド0.1</span><span class="l"><b>余</b><b>平</b> 好時速</span><span class="m">函RHネ</span><span class="n">18ト 15 ①</span><span class="o"><span>478<br></span><strong>60</strong><span>53<br>68</span></span></div>
<div><span class="a">3/2 2中③</span><span class="b">オーシ<em class="g3">Ⅲ</em></span><span class="c">芝A/-12</span><span class="d">1090<i>④</i></span><span class="e">横山和<small> 57</small></span><span class="f">③③</span><span class="h">34.2M34.8</span><span class="k">トウシンマ0.8</span><span class="l"><b>良</b><b>平</b> スタ良い</span><span class="m">函ネト</span><span class="n">16ト 6 ③</span><span class="o"><span>478<br></span><strong>55</strong><span>54<br>63</span></span></div>
<div><span class="a">3/24 1名⑥</span><span class="b">高松宮<em class="g1">Ⅰ</em></span><span class="c">芝B/-4</span><span class="d">1098<i>⑦</i></span><span class="e">吉田隼<small> 58</small></span><span class="f">⑥⑦</span><span class="h">35.3M34.5</span><span class="k">マッドクー0.5</span><span class="l"><b>余</b><b>平</b> 突っ張る</span><span class="m">函RG舌ネ</span><span class="n">18ト 13 ⑦</span><span class="o"><span>508<br></span><strong>63</strong><span>74<br>76</span></span></div>
<div><span class="a">3/24 1名⑥</span><span class="b">高松宮<em class="g1">Ⅰ</em></span><span class="c">芝B/-4</span><span class="d">1106<i>⑬</i></span><span class="e">大野拓<small> 58</small></span><span class="f">④⑤</span><span class="h">35.6M35.0</span><span class="k">マッドクー1.3</span><span class="l"><b>良</b><b>平</b> Rスム</span><span class="m">函GHネ</span><span class="n">18ト 11 ⑧</span><span class="o"><span>502<br></span><strong>53</strong><span>65<br>78</span></span></div>
<div><span class="a">2/25 1阪❷</span><span class="b">阪急杯<em class="g3">Ⅲ</em></span><span class="c">芝A/-23</span><span class="d">1100<i>⑩</i></span><span class="e">小崎綾<small> 58</small></span><span class="f">⑭⑮</span><span class="h">34.2M35.8</span><span class="k">ウインマー0.8</span><span class="l"><b>余</b><b>平</b> 二脚速い</span><span class="m">函RHネ</span><span class="n">18ト 11 ⑤</span><span class="o"><span>544<br></span><strong>64</strong><span>70<br>71</span></span></div>
<div><span class="a">3/10 1阪⑥</span><span class="b">フィ<em class="g2">Ⅱ</em></span><span class="c">芝A/-23</span><span class="d">1201<i class="w1">1</i></span><span class="e">藤岡佑<small> 55</small></span><span class="f">③③</span><span class="h">34.2M35.1</span><span class="k">コラソンビ0.2</span><span class="l"><b>良</b><b>平</b> R中頭高</span><span class="m">函RHネ</span><span class="n">15ト 4 ④</span><span class="o"><span>456<br></span><strong>58</strong><span>69<br>61</span></span></div>
<div><span class="a">3/24 2中</span><span class="b">モルガ<em class="go">OP</em></span><span class="c">芝A/-14</span><span class="d">1082<i>⑥</i></span><span class="e">菅原明<small> 58</small></span><span class="f">⑬⑬</span><span class="h">33.7M34.5</span><span class="k">アサカラキ0.3</span><span class="l"><b>余</b><b>平</b> 最後方</span><span class="m">ブ函ネ</span><span class="n">16ト 8 ②</span><span class="o"><span>474<br></span><strong>63</strong><span>56<br>57</span></span></div>
<div><span class="a">3/2 2中③</span><span class="b">オーシ<em class="g3">Ⅲ</em></span><span class="c">芝A/-12</span><span class="d">1088<i>⑥</i></span><span class="e">津村明<small> 57</small></span><span class="f">⑭⑭⑮</span><span class="h">34.4M34.4</span><span class="k">トウシンマ0.6</span><span class="l"><b>余</b><b>平</b> 追込み</span><span class="m">函ネ</span><span class="n">16ト 12 ②</span><span class="o"><span>498<br></span><strong>57</strong><span>59<br>61</span></span></div>
<div><span class="a">3/24 2阪②</span><span class="b">六甲Ｓ<em class="gl">L</em></span><span class="c">芝A/-5</span><span class="d">1346<i>⑦</i></span><span class="e">角田河<small> 58</small></span><span class="f">⑬⑫⑫</span><span class="h">36.9M34.4</span><span class="k">ボルザコン0.3</span><span class="l"><b>余</b><b>平</b> ダッシュ</span><span class="m">函Eネ</span><span class="n">16ト 13 ⑧</span><span class="o"><span>500<br></span><strong>61</strong><span>59<br>63</span></span></div>
<div><span class="a">6/16 1函⑥</span><span class="b">函館Ｓ<em class="g3">Ⅲ</em></span><span class="c">芝A/-22</span><span class="d">1091<i>⑩</i></span><span class="e">丹内祐<small> 56</small></span><span class="f">⑨⑨</span><span class="h">33.8M34.2</span><span class="k">サトノレー0.7</span><span class="l"><b>良</b><b>平</b> 完歩小さ</span><span class="m">GH舌</span><span class="n">16ト 11 ⑤</span><span class="o"><span>470<br></span><strong>57</strong><span>61<br>66</span></span></div>
<div><span class="a">1/8 1中①</span><span class="b">カーバ<em class="go">OP</em></span><span class="c">芝C/-22</span><span class="d">1079<i>④</i></span><span class="e">横山武<small> 55</small></span><span class="f">⑤⑤</span><span class="h">33.7M34.2</span><span class="k">シュバルツ0.5</span><span class="l"><b>余</b><b>平</b> 外伸び</span><span class="m">鼻ネ</span><span class="n">14ト 3 ⑥</span><span class="o"><span>474<br></span><strong>54</strong><span>57<br>63</span></span></div>
<div><span class="a">5/13 2東</span><span class="b">京王Ｓ<em class="g2">Ⅱ</em></span><span class="c">芝C/-27</span><span class="d">1211<i>⑬</i></span><span class="e">オシエ<small> 56</small></span><span class="f">⑫⑫</span><span class="h">34.8M35.6</span><span class="k">ウインマー1.4</span><span class="l"><b>余</b><b>平</b> スタ良い</span><span class="m">函ネ</span><span class="n">17ト 2 ⑬</span><span class="o"><span>504<br></span><strong>54</strong><span>54<br>42</span></span></div>
<div><span class="a">10/1 4中⑨</span><span class="b">スプリ<em class="g1">Ⅰ</em></span><span class="c">芝C/-8</span><span class="d">1082<i class="w3">3</i></span><span class="e">浜中俊<small> 55</small></span><span class="f">⑫⑫</span><span class="h">33.8M34.4</span><span class="k">ママコチャ0.2</span><span class="l"><b>余</b><b>平</b> 立回り</span><span class="m">函EHネ</span><span class="n">16ト 12 ②</span><span class="o"><span>470<br>▲3.0</span><strong>62</strong><span>70<br>71</span></span></div>
<div><span class="a">11/4　豪□</span><span class="b">ゴール</span><span class="c">芝　/</span><span class="d">1292<i class="w1">1</i></span><span class="e">パー<small> 56.5</small></span><span class="f"></span><span class="h"></span><span class="k">ベリクレス</span><span class="l"></span><span class="m"></span><span class="n">17ト</span><span class="o"></span></div>
</div>

<!-- RACE BLOCK 3 -->
<div class="rb" style="top:1200px;height:177px">
<div><span class="a">4/21 3京</span><span class="b">マイラ<em class="g2">Ⅱ</em></span><span class="c">芝A/-8</span><span class="d">1339<i>⑦</i></span><span class="e">坂井瑠<small> 55</small></span><span class="f">⑦⑦</span><span class="h">34.3M36.7</span><span class="k">ソウルラッシ1.0</span><span class="l"><b>余</b><b>平</b> R差し</span><span class="m">函EHネ</span><span class="n">17ト 13 ⑦</span><span class="o"><span>524<br>△2.2</span><strong>62</strong><span>52<br>56</span></span></div>
<div><span class="a">3/2 2中③</span><span class="b">オーシ<em class="g3">Ⅲ</em></span><span class="c">芝A/-12</span><span class="d">1088<i>⑥</i></span><span class="e">石川裕<small> 57</small></span><span class="f">⑤⑤</span><span class="h">34.6M34.2</span><span class="k">トウシンマ0.6</span><span class="l"><b>余</b><b>平</b> 好位伸び</span><span class="m">函ネ</span><span class="n">16ト 14 ⑤</span><span class="o"><span>490<br></span><strong>57</strong><span>71<br>74</span></span></div>
<div><span class="a">5/5 2東⑥</span><span class="b">ＮＨＫ<em class="g1">Ⅰ</em></span><span class="c">芝B/-12</span><span class="d">1336<i>⑬</i></span><span class="e">北村友<small> 58</small></span><span class="f">②②②</span><span class="h">34.0S35.3</span><span class="k">ジャンタル1.2</span><span class="l"><b>余</b><b>平</b> R中頭高</span><span class="m">函EHネ</span><span class="n">18ト 1 ⑤</span><span class="o"><span>474<br></span><strong>55</strong><span>56<br>59</span></span></div>
<div><span class="a">4/14 3中⑧</span><span class="b">春雷Ｓ<em class="gl">L</em></span><span class="c">芝B/-25</span><span class="d">1075<i>⑨</i></span><span class="e">ムルザ<small> 57</small></span><span class="f">⑩⑩</span><span class="h">33.7M33.8</span><span class="k">サトノレー0.6</span><span class="l"><b>余</b><b>平</b> 行きっぷ</span><span class="m">函EHネ</span><span class="n">18ト 1 ⑨</span><span class="o"><span>488<br></span><strong>55</strong><span>59<br>55</span></span></div>
<div><span class="a">6/16 1函⑥</span><span class="b">函館Ｓ<em class="g3">Ⅲ</em></span><span class="c">芝A/-22</span><span class="d">1086<i class="w3">3</i></span><span class="e">坂井瑠<small> 58</small></span><span class="f">②②</span><span class="h">33.1M35.0</span><span class="k">サトノレー0.2</span><span class="l"><b>良</b><b>平</b> スタ良い</span><span class="m">函ネ</span><span class="n">16ト 13 ③</span><span class="o"><span>496<br></span><strong>64</strong><span>68<br>61</span></span></div>
<div><span class="a">6/9 1函⑥</span><span class="b">函館Ｓ<em class="g3">Ⅲ</em></span><span class="c">芝A/-22</span><span class="d">1093<i>⑫</i></span><span class="e">大野拓<small> 57</small></span><span class="f">⑫⑪</span><span class="h">34.1M35.2</span><span class="k">サトノレー0.9</span><span class="l"><b>良</b><b>平</b> R中伸び</span><span class="m">函ネ</span><span class="n">16ト 7 ⑫</span><span class="o"><span>492<br></span><strong>56</strong><span>79<br>76</span></span></div>
<div><span class="a">4/14 3中⑧</span><span class="b">春雷Ｓ<em class="gl">L</em></span><span class="c">芝B/-25</span><span class="d">1071<i class="w1">1</i></span><span class="e">モレイ<small> 57</small></span><span class="f">③③</span><span class="h">33.9M33.2</span><span class="k">シナモンス0.0</span><span class="l"><b>良</b><b>平</b> 好位伸び</span><span class="m">函EHネ</span><span class="n">16ト 11 ①</span><span class="o"><span>534<br></span><strong>64</strong><span>64<br>68</span></span></div>
<div><span class="a">4/7 2阪⑥</span><span class="b">桜花<em class="g1">Ⅰ</em></span><span class="c">芝A/-23</span><span class="d">1325<i>⑨</i></span><span class="e">藤岡佑<small> 55</small></span><span class="f">⑤⑤</span><span class="h">34.7M34.2</span><span class="k">ステレンボ0.3</span><span class="l"><b>良</b><b>平</b> 二脚遅い</span><span class="m">函RHネ</span><span class="n">18ト 15 ④</span><span class="o"><span>454<br></span><strong>62</strong><span>62<br>58</span></span></div>
<div><span class="a">6/16 1函⑥</span><span class="b">函館Ｓ<em class="g3">Ⅲ</em></span><span class="c">芝A/-22</span><span class="d">1088<i>⑥</i></span><span class="e">武　豊<small> 57</small></span><span class="f">⑨⑨</span><span class="h">33.5M35.2</span><span class="k">サトノレー0.5</span><span class="l"><b>良</b><b>平</b> ダッシュ</span><span class="m">函Eネ</span><span class="n">16ト 12 ⑦</span><span class="o"><span>474<br></span><strong>60</strong><span>66<br>66</span></span></div>
<div><span class="a">3/24 1名⑥</span><span class="b">高松宮<em class="g1">Ⅰ</em></span><span class="c">芝B/-4</span><span class="d">1109<i>⑯</i></span><span class="e">横山典<small> 58</small></span><span class="f">⑰⑰</span><span class="h">36.2M35.8</span><span class="k">マッドクー1.6</span><span class="l"><b>余</b><b>平</b> 最後方</span><span class="m">函Eネ</span><span class="n">18ト 17 ⑦</span><span class="o"><span>490<br></span><strong>50</strong><span>61<br>61</span></span></div>
<div><span class="a">5/25 1京⑧</span><span class="b">安土城<em class="gl">L</em></span><span class="c">芝A/-25</span><span class="d">1210<i class="w1">1</i></span><span class="e">角田河<small> 57</small></span><span class="f">⑮⑮</span><span class="h">37.1S32.5</span><span class="k">グレイトゲ0.0</span><span class="l"><b>余</b><b>平</b> スタ良い</span><span class="m">函Eネ</span><span class="n">18ト 14 ⑫</span><span class="o"><span>504<br></span><strong>68</strong><span>53<br>62</span></span></div>
<div><span class="a">7/21 1札②</span><span class="b">しらか<em class="go">OP</em></span><span class="c">芝A/-20</span><span class="d">1083<i class="w2">2</i></span><span class="e">鮫島駿<small> 55</small></span><span class="f">⑪⑪</span><span class="h">34.0M34.2</span><span class="k">ゾンニッヒ0.1</span><span class="l"><b>余</b><b>平</b> スタ良い</span><span class="m">函ネト</span><span class="n">13ト 12 ⑤</span><span class="o"><span>470<br></span><strong>61</strong><span>67<br>61</span></span></div>
<div><span class="a">6/9 1函</span><span class="b">モルガ<em class="go">OP</em></span><span class="c">芝A/-26</span><span class="d">1080<i class="w2">2</i></span><span class="e">丸山元<small> 55</small></span><span class="f">⑥⑤</span><span class="h">33.4M34.6</span><span class="k">アサカラキ0.0</span><span class="l"><b>余</b><b>平</b> 好時速</span><span class="m">函ネ</span><span class="n">16ト 6 ⑥</span><span class="o"><span>478<br></span><strong>63</strong><span>64<br>63</span></span></div>
<div><span class="a">7/21 1札②</span><span class="b">しらか<em class="go">OP</em></span><span class="c">芝A/-20</span><span class="d">1084<i class="w3">3</i></span><span class="e">浜中俊<small> 56</small></span><span class="f">⑧⑤</span><span class="h">34.4M34.0</span><span class="k">ゾンニッヒ0.1</span><span class="l"><b>余</b><b>平</b> ダッシュ</span><span class="m">函ネ</span><span class="n">11ト 3 ⑦</span><span class="o"><span>498<br></span><strong>58</strong><span>60<br>61</span></span></div>
<div><span class="a">2/17 2京</span><span class="b">京都香<em class="g3">Ⅲ</em></span><span class="c">芝B/-17</span><span class="d">1203<i class="w2">2</i></span><span class="e">浜中俊<small> 57</small></span><span class="f">⑤⑤</span><span class="h">35.2M35.1</span><span class="k">ソーダズリ0.0</span><span class="l"><b>良</b><b>平</b> 好位伸び</span><span class="m">函EHネ</span><span class="n">16ト 12 ①</span><span class="o"><span>486<br></span><strong>70</strong><span>69<br>73</span></span></div>
<div><span class="a">4/6　豪■</span><span class="b">ドンカ<em class="g1">Ⅰ</em></span><span class="c">芝ダ　/</span><span class="d">1358<i>⑬</i></span><span class="e">レーン<small> 55</small></span><span class="f"></span><span class="h"></span><span class="k">セレスティ0.6</span><span class="l" style="text-align:right">ゴチャ</span><span class="m"></span><span class="n">19ト</span><span class="o"><span></span><span style="width:20px;height:22px;background:#111;border-radius:4px;margin-right:6px"></span></span></div>
</div>

<!-- RACE BLOCK 4 -->
<div class="rb" style="top:1377px;height:179px">
<div><span class="a">6/9 1函②</span><span class="b">函館Ｓ<em class="g3">Ⅲ</em></span><span class="c">芝A/-22</span><span class="d">1089<i>⑨</i></span><span class="e">藤岡佑<small> 57</small></span><span class="f">⑯⑯</span><span class="h">35.2M33.7</span><span class="k">サトノレー0.8</span><span class="l"><b>良</b><b>平</b> 直線鈍る</span><span class="m">函Eネ</span><span class="n">16ト 14 ⑥</span><span class="o"><span>514<br></span><strong>60</strong><span>54<br>61</span></span></div>
<div><span class="a">6/16 1函⑥</span><span class="b">函館Ｓ<em class="g3">Ⅲ</em></span><span class="c">芝A/-22</span><span class="d">1087<i>⑤</i></span><span class="e">角田河<small> 57</small></span><span class="f">⑤⑥</span><span class="h">33.9M34.8</span><span class="k">サトノレー0.4</span><span class="l"><b>余</b><b>平</b> 行きっぷ</span><span class="m">函Eネ</span><span class="n">16ト 5 ③</span><span class="o"><span>490<br>☆</span><strong>64</strong><span>65<br>65</span></span></div>
<div><span class="a">8/11 1札</span><span class="b">ＵＨＢ<em class="go">OP</em></span><span class="c">芝A/-28</span><span class="d">1082<i>⑥</i></span><span class="e">北村友<small> 56</small></span><span class="f">⑤⑤</span><span class="h">33.6M34.6</span><span class="k">ゾンニッヒ0.6</span><span class="l"><b>余</b><b>平</b> 好位伸び</span><span class="m">函GHネ</span><span class="n">16ト 11 ②</span><span class="o"><span>472<br>○2.3</span><strong>60</strong><span>50<br>54</span></span></div>
<div><span class="a">6/16 1函⑥</span><span class="b">函館Ｓ<em class="g3">Ⅲ</em></span><span class="c">芝A/-22</span><span class="d">1094<i>⑩</i></span><span class="e">富田暁<small> 57</small></span><span class="f">⑫⑬</span><span class="h">34.4M35.0</span><span class="k">サトノレー1.0</span><span class="l"><b>余</b><b>平</b> 外伸び</span><span class="m">函GNネト</span><span class="n">16ト 12 ⑦</span><span class="o"><span>474<br></span><strong>54</strong><span>67<br>62</span></span></div>
<div><span class="a">6/22 1函⑥</span><span class="b">青函Ｓ<em class="go">OP</em></span><span class="c">芝B/-33</span><span class="d">1092<i>⑥</i></span><span class="e">鮫島駿<small> 58</small></span><span class="f">⑦⑥</span><span class="h">34.0M35.2</span><span class="k">ジャスパー0.8</span><span class="l"><b>良</b><b>平</b> 伸び欠く</span><span class="m">函ネ</span><span class="n">16ト 13 ⑥</span><span class="o"><span>516<br>○2.3</span><strong>60</strong><span>69<br>69</span></span></div>
<div><span class="a">8/11 1札</span><span class="b">ＵＨＢ<em class="go">OP</em></span><span class="c">芝A/-28</span><span class="d">1090<i>⑩</i></span><span class="e">大野拓<small> 57</small></span><span class="f">⑧⑦</span><span class="h">34.0M35.0</span><span class="k">ゾンニッヒ0.8</span><span class="l"><b>良</b><b>平</b> 見せ場</span><span class="m">函ネ</span><span class="n">16ト 7 ②</span><span class="o"><span>490<br></span><strong>52</strong><span>73<br>74</span></span></div>
<div><span class="a">6/16 1函⑥</span><span class="b">函館Ｓ<em class="g3">Ⅲ</em></span><span class="c">芝A/-22</span><span class="d">1084<i class="w1">1</i></span><span class="e">浜中俊<small> 58</small></span><span class="f">⑤③</span><span class="h">33.8M34.6</span><span class="k">ウイングレ0.2</span><span class="l"><b>余</b><b>平</b> R差し</span><span class="m">函EHネ</span><span class="n">16ト 8 ②</span><span class="o"><span>532<br>▲2.2</span><strong>66</strong><span>72<br>66</span></span></div>
<div><span class="a">5/25 1京⑧</span><span class="b">葵Ｓ<em class="g3">Ⅲ</em></span><span class="c">芝A/-25</span><span class="d">1075<i>⑥</i></span><span class="e">藤岡佑<small> 56</small></span><span class="f">⑤⑤</span><span class="h">34.1M33.4</span><span class="k">ピューロマ0.6</span><span class="l"><b>余</b><b>平</b> スタ良い</span><span class="m">函ネ</span><span class="n">18ト 6 ⑤</span><span class="o"><span>482<br>◎3.3</span><strong>52</strong><span>57<br>60</span></span></div>
<div><span class="a">7/21 1札②</span><span class="b">しらか<em class="go">OP</em></span><span class="c">芝A/-20</span><span class="d">1083<i class="w1">1</i></span><span class="e">武　豊<small> 57</small></span><span class="f">⑥⑥</span><span class="h">34.0M34.3</span><span class="k">モリノドリ0.1</span><span class="l"><b>余</b><b>平</b> Rスム</span><span class="m">函Eネ</span><span class="n">13ト 12 ②</span><span class="o"><span>474<br>○2.3</span><strong>64</strong><span>62<br>65</span></span></div>
<div><span class="a">6/16 1函⑥</span><span class="b">函館Ｓ<em class="g3">Ⅲ</em></span><span class="c">芝A/-22</span><span class="d">1094<i>⑩</i></span><span class="e">横山和<small> 57</small></span><span class="f">⑭⑬</span><span class="h">33.8M35.6</span><span class="k">サトノレー1.0</span><span class="l"><b>余</b><b>平</b> 二脚遅い</span><span class="m">函ネ</span><span class="n">16ト 12 ⑥</span><span class="o"><span>490<br></span><strong>55</strong><span>73<br>67</span></span></div>
<div><span class="a">6/2 2小</span><span class="b">北九州<em class="g3">Ⅲ</em></span><span class="c">芝A/-12</span><span class="d">1089<i>⑧</i></span><span class="e">角田河<small> 57</small></span><span class="f">⑬⑫</span><span class="h">33.4M35.5</span><span class="k">ピューロマ0.6</span><span class="l"><b>良</b><b>平</b> スタ良い</span><span class="m">ブRHネ</span><span class="n">18ト 10 ③</span><span class="o"><span>496<br></span><strong>45</strong><span>58<br>53</span></span></div>
<div><span class="a">8/11 1札</span><span class="b">ＵＨＢ<em class="go">OP</em></span><span class="c">芝A/-28</span><span class="d">1094<i>⑯</i></span><span class="e">丹内祐<small> 56</small></span><span class="f">⑯⑯</span><span class="h">34.4M35.0</span><span class="k">ゾンニッヒ1.2</span><span class="l"><b>余</b><b>平</b> 見せ場</span><span class="m">函ネ</span><span class="n">16ト 8 ⑥</span><span class="o"><span>474<br></span><strong>47</strong><span>61<br>62</span></span></div>
<div><span class="a">6/22 1函⑥</span><span class="b">青函Ｓ<em class="go">OP</em></span><span class="c">芝B/-33</span><span class="d">1088<i class="w1">1</i></span><span class="e">横山武<small> 55</small></span><span class="f">⑥⑤</span><span class="h">33.9M34.9</span><span class="k">ジャスパー0.0</span><span class="l"><b>良</b><b>平</b> 完勝</span><span class="m">函GHネ</span><span class="n">16ト 12 ④</span><span class="o"><span>472<br></span><strong>45</strong><span>63<br>60</span></span></div>
<div><span class="a">8/11 1札</span><span class="b">ＵＨＢ<em class="go">OP</em></span><span class="c">芝A/-28</span><span class="d">1080<i class="w1">1</i></span><span class="e">武　豊<small> 55</small></span><span class="f">③③</span><span class="h">34.2M33.8</span><span class="k">ゾンニッヒ0.1</span><span class="l"><b>余</b><b>平</b> スタ良い</span><span class="m">函ネ</span><span class="n">16ト 4 ①</span><span class="o"><span>478<br></span><strong>63</strong><span>64<br>63</span></span></div>
<div><span class="a">3/24 1名⑥</span><span class="b">高松宮<em class="g1">Ⅰ</em></span><span class="c">芝B/-4</span><span class="d">1089<i class="w2">2</i></span><span class="e">浜中俊<small> 56</small></span><span class="f">⑩⑩</span><span class="h">34.6M34.3</span><span class="k">マッドクー0.1</span><span class="l"><b>良</b><b>平</b> R差し</span><span class="m">函ネ</span><span class="n">18ト 3 ⑤</span><span class="o"><span>472<br></span><strong>74</strong><span>79<br>79</span></span></div>
<div><span class="a">4/28　香□</span><span class="b">チャン<em class="g1">Ⅰ</em></span><span class="c">芝　/</span><span class="d">1362<i>⑩</i></span><span class="e">レーン<small> 57</small></span><span class="f"></span><span class="h"></span><span class="k">ビューティ1.7</span><span class="l" style="text-align:right">後方から</span><span class="m"></span><span class="n">11ト</span><span class="o"><span>445</span></span></div>
</div>

<!-- TOTALS -->
<div class="r" style="top:1556px;height:59px;font-size:11px;line-height:9.5px;border-bottom:none">
<div style="background:linear-gradient(90deg,#aaa 0 25%,#fff 25%)">全全函札<br>右芝芝<br>2200<br>2200<br>2100<br>6410</div><div style="background:linear-gradient(90deg,#aaa 0 25%,#fff 25%)">全全函札<br>右芝芝<br>5310<br>2100<br>2000<br>7610</div><div style="background:linear-gradient(90deg,#aaa 0 25%,#fff 25%)">全全函札<br>右芝芝<br>3200<br>0000<br>0000<br>4201</div><div style="background:linear-gradient(90deg,#aaa 0 25%,#fff 25%)">全全函札<br>右芝芝<br>5501<br>7740<br>4300<br>16121 2</div><div style="background:linear-gradient(90deg,#aaa 0 25%,#fff 25%)">全全函札<br>右芝芝<br>5300<br>2200<br>3310<br>5410</div><div style="background:linear-gradient(90deg,#aaa 0 25%,#fff 25%)">全全函札<br>右芝芝<br>6612<br>2201<br>0000<br>15113</div><div style="background:linear-gradient(90deg,#aaa 0 25%,#fff 25%)">全全函札<br>右芝芝<br>6620<br>1110<br>0000<br>1100</div><div style="background:linear-gradient(90deg,#aaa 0 25%,#fff 25%)">全全函札<br>右芝芝<br>3300<br>2200<br>0000<br>3200</div><div style="background:linear-gradient(90deg,#aaa 0 25%,#fff 25%)">全全函札<br>右芝芝<br>6611<br>4400<br>3200<br>1161 1</div><div style="background:linear-gradient(90deg,#aaa 0 25%,#fff 25%)">全全函札<br>右芝芝<br>2100<br>3200<br>0000<br>1481 0</div><div style="background:linear-gradient(90deg,#aaa 0 25%,#fff 25%)">全全函札<br>右芝芝<br>5200<br>2100<br>1000<br>6310</div><div style="background:linear-gradient(90deg,#aaa 0 25%,#fff 25%)">全全函札<br>右芝芝<br>4321<br>2100<br>1100<br>5411</div><div style="background:linear-gradient(90deg,#aaa 0 25%,#fff 25%)">全全函札<br>右芝芝<br>3210<br>2100<br>1000<br>6301</div><div style="background:linear-gradient(90deg,#aaa 0 25%,#fff 25%)">全全函札<br>右芝芝<br>5300<br>1100<br>2100<br>8400</div><div style="background:linear-gradient(90deg,#aaa 0 25%,#fff 25%)">全全函札<br>右芝芝<br>6311<br>4200<br>2100<br>1051 1</div><div style="background:linear-gradient(90deg,#aaa 0 25%,#fff 25%)">全全函札<br>右芝芝<br>2100<br>1000<br>0000<br>2100</div></div>
<div class="r" style="top:1615px;height:12px;background:#4a4a4a;color:#fff;font-size:11px;line-height:11px;letter-spacing:5px"><div>0100</div><div>1000</div><div>0000</div><div>0002</div><div>0011</div><div>0002</div><div>1001</div><div>0000</div><div>1001</div><div>0001</div><div>0100</div><div>0000</div><div>0000</div><div>0001</div><div>1000</div><div>0000</div></div>
<div class="r" style="top:1627px;height:12px;font-size:11px;line-height:11px;letter-spacing:5px"><div>0216</div><div>1025</div><div>1004</div><div>1301</div><div>4125</div><div>2008</div><div>2001</div><div>2003</div><div>2224</div><div>1201</div><div>2102</div><div>0102</div><div>1102</div><div>2103</div><div>2021</div><div>2011</div></div>
<div class="r" style="top:1639px;height:13px;font-size:10px;line-height:12px;font-weight:bold;letter-spacing:-.3px;border-bottom:2px solid #111"><div>⑯セッション</div><div>⑮オタルエバ</div><div>⑭ダノンマッ</div><div>⑬ジュビリー</div><div>⑫ビッグシー</div><div>⑪シュバルツ</div><div>⑩サトノレー</div><div>⑨エトヴプレ</div><div>⑧ゾンニッヒ</div><div>⑦マテンロウ</div><div>⑥エイシンス</div><div>⑤シナモンス</div><div>④モリノドリ</div><div>③ブルバレイ</div><div>②ナムラクレ</div><div>①オオバンブ</div></div>
<div class="abs" style="left:22px;top:1656px;width:1160px;overflow:hidden;font-size:10.5px;color:#333;white-space:nowrap">万全を期する為に、当日の発走時刻、出走馬、斤量、騎手、枠順等はＪＲＡ発行のものと照合してください。放牧先データは、原則として直前に入手した資料に基づいて表記しています。ご了承のほど、お願い致します。※本紙からの複製、転載、システムの転用を禁ずる。</div>

<!-- LEGEND -->
<div class="lg" style="top:89px;height:24px;font-size:13px;font-weight:bold;line-height:22px">枠番</div>
<div class="lg" style="top:113px;height:22px;font-size:13px;font-weight:bold;line-height:20px">馬番</div>
<div class="lg" style="top:135px;height:173px;font-size:15px;font-weight:bold">
<div style="font-size:10px;margin-top:8px">馬記号</div>
<div class="abs" style="left:12px;top:20px;line-height:16px">母<br><br>母<br>父</div>
<div class="abs" style="left:50px;top:20px;line-height:20px">馬<br>名</div>
<div class="abs" style="right:12px;top:20px;line-height:16px">父<br><br>父<br>父</div>
<div class="abs" style="left:48px;top:100px;writing-mode:vertical-rl;font-size:11px">（激走馬印）</div>
<div class="abs" style="left:12px;top:130px;line-height:16px">性<br>齢</div>
<div class="abs" style="right:12px;top:130px;line-height:16px">毛<br>色</div></div>
<div class="lg" style="top:308px;height:37px;line-height:12px;font-size:9px">乗替　　斤量 ブリンカー<br><span style="font-size:12px">騎手名</span><br>本年勝利数と順位</div>
<div class="lg" style="top:345px;height:23px;line-height:11px;font-size:9px"><span style="font-size:12px">厩舎［所属］</span><br>本年勝利数と順位</div>
<div class="lg" style="top:368px;height:18px;font-size:8px;line-height:17px">放牧先［帰厩後何走目］ランク</div>
<div class="lg" style="top:386px;height:16px;font-size:9px;line-height:15px">間隔／厩舎指数</div>
<div class="lg" style="top:402px;height:15px;font-size:9px;line-height:14px">調教指数／調教評価</div>
<div class="lg" style="top:417px;height:15px;font-size:9px;line-height:14px">情報専門紙［◎,○,▲,△］</div>
<div class="abs" style="left:949px;top:432px;width:24px;height:414px;background:#4a4a4a;color:#fff;writing-mode:vertical-rl;text-orientation:upright;font-size:14px;font-weight:bold;padding-top:20px;text-align:left;border:1px solid #333">過去成績集計</div>
<div class="abs" style="left:973px;top:432px;width:94px;height:16px;background:#111;color:#fff;font-weight:bold;font-size:12px;line-height:16px;text-align:center;letter-spacing:4px">IDM</div>
<div class="abs" style="left:973px;top:448px;width:94px;height:398px;background:#c6c6c6;border:1px solid #333;font-size:9px;color:#222;overflow:hidden">
<div style="text-align:center;font-size:11px;line-height:14px">情報<br>追切　展開</div><div style="padding-left:4px;font-size:11px;line-height:14px">仕上 <b style="font-size:14px">本紙</b></div>
<div style="border-top:1px solid #888;text-align:center;line-height:16px;font-size:10px">基準単(人気)</div>
<div style="border-top:1px solid #888;text-align:center;line-height:13px;font-size:10px">基準複(人気)</div>
<div style="border-top:1px solid #888;text-align:center;line-height:13px;padding:10px 0;height:60px">距離別の<br>競走成績</div>
<div style="border-top:1px solid #888;text-align:center;line-height:11px;padding-top:6px;height:75px">距離別の<br>最高ＩＤＭ<br><span style="font-size:8px">ＩＤＭ<br>競馬場<br>距離<br>記録時期</span></div>
<div style="border-top:1px solid #888;text-align:center;line-height:13px;font-size:8px">当該コース成績</div>
<div style="border-top:1px solid #888;text-align:center;line-height:10px;font-size:7px;height:21px">当該コース最高IDM、ベース<br>距離、タイム、記録時期</div>
<div style="border-top:1px solid #888;text-align:center;line-height:12px;font-size:7px">持ち時計／当該コース時計</div>
<div style="border-top:1px solid #888;text-align:center;line-height:12px;font-size:8px">出遅率(%)連対率(%)</div>
<div style="border-top:1px solid #888;text-align:center;line-height:12px;font-size:8px">馬・騎手成績</div>
<div style="border-top:1px solid #888;text-align:center;line-height:12px">脚質</div>
<div style="border-top:1px solid #888;text-align:center;line-height:12px">適距離</div>
<div style="border-top:1px solid #888;text-align:center;line-height:12px">距離／重適性</div>
<div style="border-top:1px solid #888;text-align:center;line-height:13px">蹄</div>
<div style="border-top:1px solid #888;text-align:center;line-height:13px">体型</div>
<div style="border-top:1px solid #888;text-align:center;line-height:12px">馬主</div>
<div style="border-top:1px solid #888;text-align:center;line-height:12px">生産者</div>
<div style="border-top:1px solid #888;text-align:center;line-height:12px">獲得賞金</div>
<div style="border-top:1px solid #888;text-align:center;line-height:12px">収得賞金</div></div>

<div class="abs" style="left:949px;top:847px;width:24px;height:709px;background:#4a4a4a;border:1px solid #333"></div>
<div class="abs" style="left:949px;top:910px;width:24px;color:#fff;font-weight:bold;font-size:14px;line-height:22px;text-align:center">4<br>走<br>前</div>
<div class="abs" style="left:949px;top:1087px;width:24px;color:#fff;font-weight:bold;font-size:14px;line-height:22px;text-align:center">3<br>走<br>前</div>
<div class="abs" style="left:949px;top:1264px;width:24px;color:#fff;font-weight:bold;font-size:14px;line-height:22px;text-align:center">2<br>走<br>前</div>
<div class="abs" style="left:949px;top:1441px;width:24px;color:#fff;font-weight:bold;font-size:14px;line-height:22px;text-align:center">1<br>走<br>前</div>
<div class="abs" style="left:949px;top:1023px;width:24px;border-top:1px solid #888"></div>
<div class="abs" style="left:949px;top:1200px;width:24px;border-top:1px solid #888"></div>
<div class="abs" style="left:949px;top:1377px;width:24px;border-top:1px solid #888"></div>
<div class="abs" style="left:973px;top:847px;width:94px;height:709px;background:#c6c6c6;border:1px solid #333;font-size:10px;line-height:12.5px;padding-left:4px;color:#222;overflow:hidden">
<div style="background:#111;color:#fff;margin:0 -1px 0 -4px;text-align:center;font-size:11px;line-height:14px">競走成績欄の<br>説明</div>
<div style="margin-top:3px"><b>[1行目]</b><br>開催日／回場日</div>
<div style="margin-top:3px"><b>[2行目]</b><br>レース名／クラス</div>
<div style="margin-top:3px"><b>[3行目]</b><br>距離コース／馬場差</div>
<div style="margin-top:3px"><b>[4行目]</b><br>タイム／着順</div>
<div style="margin-top:3px"><b>[5行目]</b><br>騎手／斤量</div>
<div style="margin-top:3px"><b>[6行目]</b><br>コーナー順位<br><span style="font-size:8.5px">1角,2角,3角,4角<br>出遅れデータを1角に<br>表します。(例)<br>❷：2馬身出遅れ</span></div>
<div style="margin-top:3px"><b>[7行目]</b><br>前3F/ﾍﾟｰｽ/後3F</div>
<div style="margin-top:3px"><b>[8行目]</b><br>勝馬(または2着馬)<br>着差／直線位置取り</div>
<div style="margin-top:3px"><b>[9行目]</b><br>馬体／気配／特記</div>
<div style="margin-top:3px"><b>[10行目]</b><br>馬具／脚元</div>
<div style="margin-top:3px"><b>[11行目]</b><br>頭数／枠／人気</div>
<div style="margin-top:3px"><b>[12行目]</b><br>馬体重／パドック点<br>ＩＤＭ<br>(上)追切指数<br>(下)仕上指数</div>
<div style="margin-top:6px"><b style="background:#111;color:#fff">IDM</b>の白抜数字は<br>ダート戦</div></div>
<div class="abs" style="left:949px;top:1556px;width:24px;height:59px;background:#aaa;border:1px solid #333;font-size:11px;font-weight:bold;line-height:13px;text-align:center;padding-top:6px">全<br>成<br>績</div>
<div class="abs" style="left:973px;top:1556px;width:94px;height:59px;background:#c6c6c6;border:1px solid #333;font-size:10px;text-align:center;line-height:13px;padding-top:8px">競馬場別成績<br><span style="font-size:8px">(芝・ダ・障別)</span><br><span style="line-height:20px">回り別成績</span></div>
<div class="abs" style="left:949px;top:1615px;width:118px;height:12px;background:#4a4a4a;color:#fff;font-size:10px;line-height:12px;text-align:center">重・不良成績</div>
<div class="abs" style="left:949px;top:1627px;width:118px;height:12px;background:#c6c6c6;border:1px solid #333;font-size:10px;line-height:10px;text-align:center">クラス別成績</div>
<div class="abs" style="left:949px;top:1639px;width:118px;height:13px;background:#c6c6c6;border:1px solid #333;border-bottom:2px solid #111;font-size:10px;line-height:11px;text-align:center">馬番／馬名</div>

<!-- RIGHT PANEL -->
<div class="abs" style="left:1067px;top:89px;width:117px;height:1563px;border:1px solid #222;border-left:none;border-bottom:2px solid #111"></div>
<div class="abs" style="left:1098px;top:92px;border:1px solid #333;font-size:10px;padding:0 2px;font-weight:bold">展開予想</div>
<div class="abs" style="left:1088px;top:108px;font-size:10px">予想ペース <b style="font-size:12px">H</b></div>
<div class="abs" style="left:1110px;top:125px;font-size:11px;font-weight:bold">ゴール図</div>
<div class="abs" style="left:1083px;top:140px;width:88px;height:360px;border:1px solid #999"></div>
<div class="abs" style="left:1083px;top:140px;width:88px;height:40px;border-bottom:1px solid #ccc;font-size:11px;font-weight:bold;line-height:12px"><span class="abs" style="left:3px;top:2px">◎<br>大<br>外</span><span class="abs" style="left:20px;top:2px">◎<br>外</span><span class="abs" style="left:38px;top:2px">◎<br>中</span><span class="abs" style="left:55px;top:2px">◎<br>内<br>↑</span><span class="abs" style="left:72px;top:2px">◎<br>最<br>内</span></div>
<div class="stripe" style="top:140px;height:360px">差0123456789012345678901234 5</div>
<div class="abs" style="left:1083px;top:505px;width:100px;text-align:center;font-size:11px;font-weight:bold">残り３Ｆ図</div>
<div class="abs" style="left:1083px;top:520px;width:88px;height:360px;border:1px solid #999"></div>
<div class="abs" style="left:1083px;top:520px;width:88px;height:40px;border-bottom:1px solid #ccc;font-size:11px;font-weight:bold;line-height:12px"><span class="abs" style="left:6px;top:14px">大<br>外</span><span class="abs" style="left:25px;top:14px">外</span><span class="abs" style="left:42px;top:14px">中</span><span class="abs" style="left:60px;top:14px">内<br>↑</span></div>
<div class="stripe" style="top:520px;height:360px">差0123456789012345678901234 5</div>
<div class="abs" style="left:1083px;top:885px;width:100px;text-align:center;font-size:11px;font-weight:bold">道中図</div>
<div class="abs" style="left:1083px;top:897px;width:88px;height:356px;border:1px solid #999"></div>
<div class="abs" style="left:1083px;top:897px;width:88px;height:38px;border-bottom:1px solid #ccc;font-size:11px;font-weight:bold;line-height:12px"><span class="abs" style="left:25px;top:10px">外</span><span class="abs" style="left:42px;top:10px">中</span><span class="abs" style="left:60px;top:10px">内<br>↑</span></div>
<div class="stripe" style="top:897px;height:356px;letter-spacing:0">差0123456789012345678901234567890(1=半馬身)</div>

<!-- caps goal -->
<div class="cap" style="--c:#fff200;left:1152px;top:180px">9</div>
<div class="cap" style="--c:#fff;left:1084px;top:195px">2</div>
<div class="cap" style="--c:#fff200;left:1118px;top:205px">10</div>
<div class="cap" style="--c:#1f78c8;left:1118px;top:230px">8</div>
<div class="cap" style="--c:#fff;left:1135px;top:230px">1</div>
<div class="cap" style="--c:#e8202a;left:1118px;top:253px">6</div>
<div class="cap" style="--c:#111;left:1084px;top:267px">4</div>
<div class="cap" style="--c:#3cb44a;left:1101px;top:267px">12</div>
<div class="cap" style="--c:#f47c4a;left:1084px;top:290px">14</div>
<div class="cap" style="--c:#f08cbf;left:1118px;top:290px">15</div>
<div class="cap" style="--c:#e8202a;left:1135px;top:302px">5</div>
<div class="cap" style="--c:#111;left:1152px;top:302px">3</div>
<div class="cap" style="--c:#f08cbf;left:1118px;top:328px">16</div>
<div class="cap" style="--c:#3cb44a;left:1152px;top:340px">11</div>
<div class="cap" style="--c:#1f78c8;left:1135px;top:365px">7</div>
<div class="cap" style="--c:#f47c4a;left:1101px;top:377px">13</div>
<!-- caps 3F -->
<div class="cap" style="--c:#fff200;left:1152px;top:560px">9</div>
<div class="cap" style="--c:#3cb44a;left:1101px;top:580px">12</div>
<div class="cap" style="--c:#fff200;left:1118px;top:590px">10</div>
<div class="cap" style="--c:#3cb44a;left:1135px;top:580px">11</div>
<div class="cap" style="--c:#f08cbf;left:1135px;top:605px">15</div>
<div class="cap" style="--c:#e8202a;left:1101px;top:610px">5</div>
<div class="cap" style="--c:#f47c4a;left:1084px;top:615px">14</div>
<div class="cap" style="--c:#111;left:1152px;top:600px">3</div>
<div class="cap" style="--c:#f08cbf;left:1152px;top:630px">16</div>
<div class="cap" style="--c:#fff;left:1135px;top:640px">1</div>
<div class="cap" style="--c:#1f78c8;left:1118px;top:640px">8</div>
<div class="cap" style="--c:#111;left:1101px;top:645px">4</div>
<div class="cap" style="--c:#1f78c8;left:1118px;top:665px">7</div>
<div class="cap" style="--c:#e8202a;left:1101px;top:675px">6</div>
<div class="cap" style="--c:#fff;left:1152px;top:660px">2</div>
<div class="cap" style="--c:#f47c4a;left:1084px;top:700px">13</div>
<!-- caps dochu -->
<div class="cap" style="--c:#fff200;left:1152px;top:933px">9</div>
<div class="cap" style="--c:#3cb44a;left:1118px;top:968px">12</div>
<div class="cap" style="--c:#e8202a;left:1135px;top:968px">5</div>
<div class="cap" style="--c:#111;left:1152px;top:968px">3</div>
<div class="cap" style="--c:#f08cbf;left:1118px;top:992px">15</div>
<div class="cap" style="--c:#fff200;left:1135px;top:992px">10</div>
<div class="cap" style="--c:#fff;left:1152px;top:1005px">1</div>
<div class="cap" style="--c:#f47c4a;left:1118px;top:1017px">14</div>
<div class="cap" style="--c:#3cb44a;left:1135px;top:1017px">11</div>
<div class="cap" style="--c:#f08cbf;left:1152px;top:1030px">16</div>
<div class="cap" style="--c:#f47c4a;left:1118px;top:1042px">13</div>
<div class="cap" style="--c:#1f78c8;left:1135px;top:1053px">8</div>
<div class="cap" style="--c:#1f78c8;left:1152px;top:1053px">7</div>
<div class="cap" style="--c:#fff;left:1152px;top:1078px">2</div>
<div class="cap" style="--c:#111;left:1135px;top:1088px">4</div>
<div class="cap" style="--c:#e8202a;left:1152px;top:1127px">6</div>

</body></html>
